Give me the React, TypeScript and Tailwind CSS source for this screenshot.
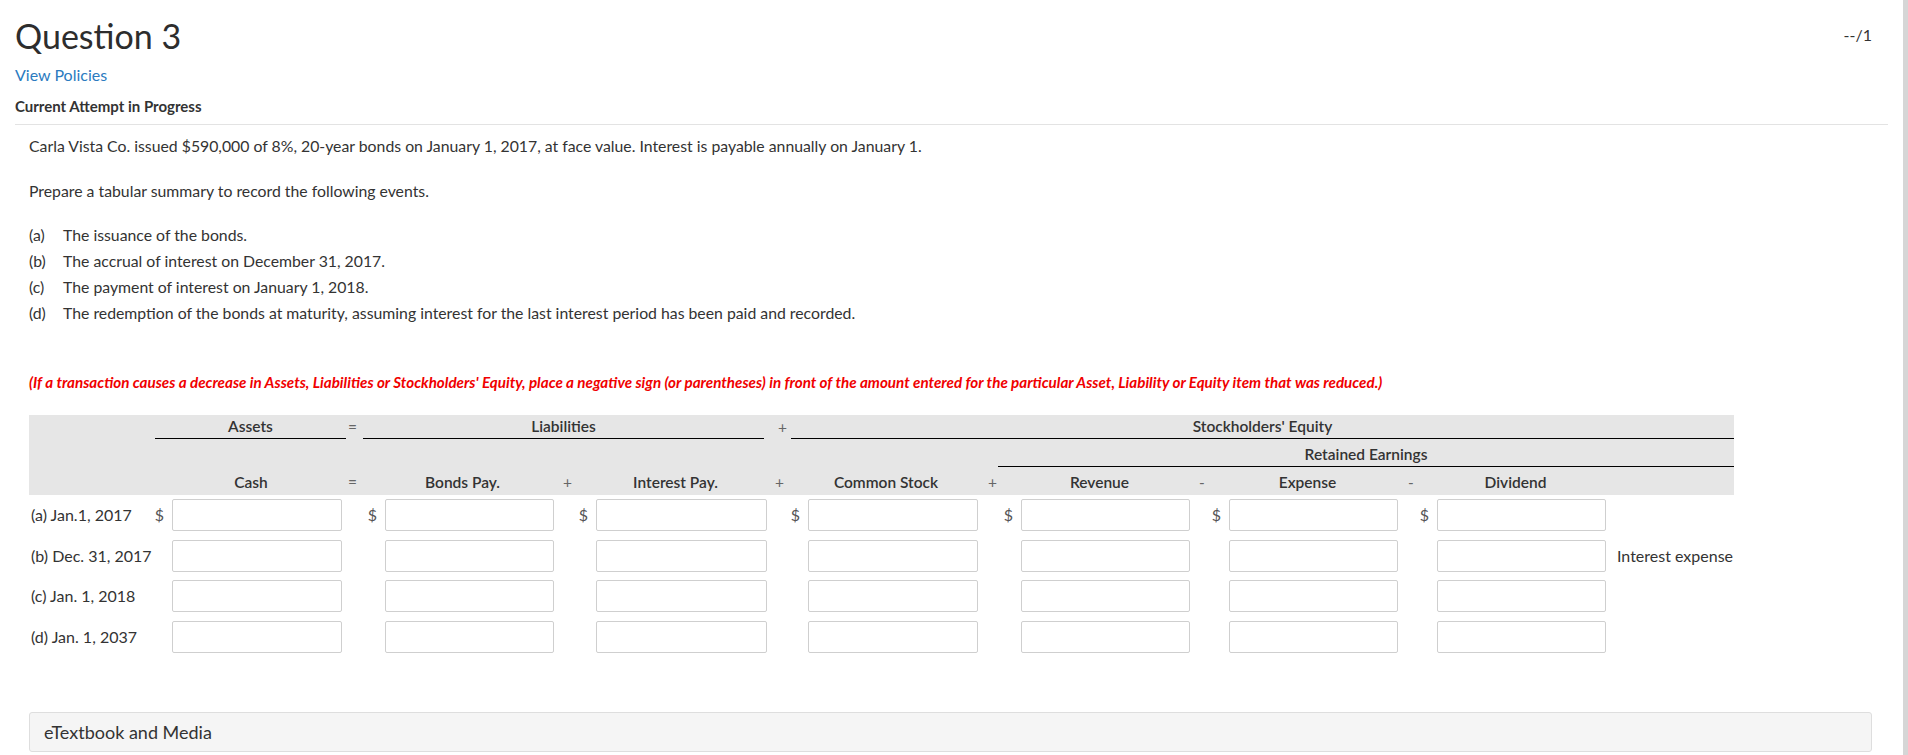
import React from "react";

const GRID =
  "grid grid-cols-[126px_17px_170px_43px_169px_42px_171px_41px_170px_43px_169px_39px_169px_39px_169px_128px]";

function Cell() {
  return <div className="h-[32px] w-full border border-[#cfcfcf] bg-white rounded-[2px]" />;
}

const rows = [
  { label: "(a) Jan.1, 2017", dollars: true },
  { label: "(b) Dec. 31, 2017", note: "Interest expense" },
  { label: "(c) Jan. 1, 2018" },
  { label: "(d) Jan. 1, 2037" },
];

export default function App() {
  return (
    <div className="flex w-[1908px] h-[755px] overflow-hidden bg-white text-[#333] font-[family-name:Lato,Liberation_Sans,sans-serif]">
      <div className="flex-1 pl-[15px] pr-[15px]">
        {/* Title row */}
        <div className="flex justify-between items-start pt-[14px]">
          <h1 className="text-[34px] leading-[43px] font-normal text-[#2d2d2d]">Question 3</h1>
          <div className="text-[16px] mt-[9px] mr-[16px] text-[#333]">--/1</div>
        </div>
        <div className="mt-[8px] text-[16px] leading-[20px] text-[#2b7bbf]">View Policies</div>
        <div className="mt-[11px] text-[15px] leading-[20px] font-bold text-[#333]">
          Current Attempt in Progress
        </div>
        <div className="mt-[8px] h-px bg-[#e3e3e3]" />

        <div className="pl-[14px] text-[15.8px] leading-[20px] text-[#333]">
          <p className="mt-[11px]">
            Carla Vista Co. issued $590,000 of 8%, 20-year bonds on January 1, 2017, at face value. Interest is
            payable annually on January 1.
          </p>
          <p className="mt-[25px]">Prepare a tabular summary to record the following events.</p>
          <div className="mt-[24px] flex flex-col gap-[6px]">
            {[
              ["(a)", "The issuance of the bonds."],
              ["(b)", "The accrual of interest on December 31, 2017."],
              ["(c)", "The payment of interest on January 1, 2018."],
              ["(d)", "The redemption of the bonds at maturity, assuming interest for the last interest period has been paid and recorded."],
            ].map(([a, b]) => (
              <div key={a} className="flex">
                <span className="w-[34px]">{a}</span>
                <span>{b}</span>
              </div>
            ))}
          </div>
          <p className="mt-[49px] text-[15.2px] font-bold italic text-[#f00000]">
            (If a transaction causes a decrease in Assets, Liabilities or Stockholders' Equity, place a negative
            sign (or parentheses) in front of the amount entered for the particular Asset, Liability or Equity
            item that was reduced.)
          </p>

          {/* Table */}
          <div className="mt-[23px]">
            <div className={`${GRID} bg-[#e6e6e6] w-[1705px] text-[15.5px] font-semibold text-[#333]`}>
              {/* Row 1 */}
              <div className="row-start-1 col-start-2 col-span-2 h-[24px] mr-[-4px] border-b border-black flex items-end justify-center pb-[2px]">
                Assets
              </div>
              <div className="row-start-1 col-start-4 flex items-end pb-[2px] pl-[6px] font-normal text-[#666]">=</div>
              <div className="row-start-1 col-start-4 col-span-4 ml-[21px] mr-[3px] border-b border-black flex items-end justify-center pb-[2px]">
                Liabilities
              </div>
              <div className="row-start-1 col-start-8 flex items-end pb-[2px] pl-[11px] font-normal text-[#666]">+</div>
              <div className="row-start-1 col-start-8 col-span-9 ml-[24px] border-b border-black flex items-end justify-center pb-[2px]">
                Stockholders' Equity
              </div>
              {/* Row 2 */}
              <div className="row-start-2 col-start-1 h-[28px]" />
              <div className="row-start-2 col-start-10 col-span-7 ml-[20px] h-[28px] border-b border-black flex items-center justify-center pt-[2px]">
                Retained Earnings
              </div>
              {/* Row 3 */}
              {[
                ["col-start-3", "Cash", "pr-[12px]"],
                ["col-start-5", "Bonds Pay.", "pr-[14px]"],
                ["col-start-7", "Interest Pay.", "pr-[12px]"],
                ["col-start-9", "Common Stock", "pr-[14px]"],
                ["col-start-11", "Revenue", "pr-[12px]"],
                ["col-start-13", "Expense", "pr-[12px]"],
                ["col-start-15", "Dividend", "pr-[12px]"],
              ].map(([c, t, p]) => (
                <div key={t} className={`row-start-3 ${c} ${p} h-[28px] flex items-center justify-center pt-[2px]`}>
                  {t}
                </div>
              ))}
              {[
                ["col-start-4", "=", "pl-[6px]"],
                ["col-start-6", "+", "pl-[9px]"],
                ["col-start-8", "+", "pl-[8px]"],
                ["col-start-10", "+", "pl-[10px]"],
                ["col-start-12", "-", "pl-[9px]"],
                ["col-start-14", "-", "pl-[10px]"],
              ].map(([c, t, p]) => (
                <div key={c} className={`row-start-3 ${c} ${p} h-[28px] flex items-center pt-[2px] font-normal text-[#666]`}>
                  {t}
                </div>
              ))}
            </div>

            <div className="pt-[4px] text-[16px] text-[#333]">
              {rows.map((r) => (
                <div key={r.label} className={`${GRID} w-[1705px] h-[40.5px]`}>
                  <div className="flex items-center h-[32px] pl-[2px] whitespace-nowrap">{r.label}</div>
                  {[0, 1, 2, 3, 4, 5, 6].map((k) => (
                    <React.Fragment key={k}>
                      <div className="flex items-center justify-end h-[32px] pr-[8px] text-[#555]">
                        {r.dollars ? "$" : ""}
                      </div>
                      <Cell />
                    </React.Fragment>
                  ))}
                  <div className="flex items-center h-[32px] pl-[11px] whitespace-nowrap">{r.note ?? ""}</div>
                </div>
              ))}
            </div>
          </div>
        </div>

        <div className="ml-[14px] mr-[16px] mt-[51px] h-[40px] rounded-[3px] border border-[#dedede] bg-[#f5f5f5] flex items-center pl-[14px] text-[18px] text-[#333]">
          eTextbook and Media
        </div>
      </div>
      <div className="w-[5px] h-full bg-[#d6d6d6]" />
    </div>
  );
}
